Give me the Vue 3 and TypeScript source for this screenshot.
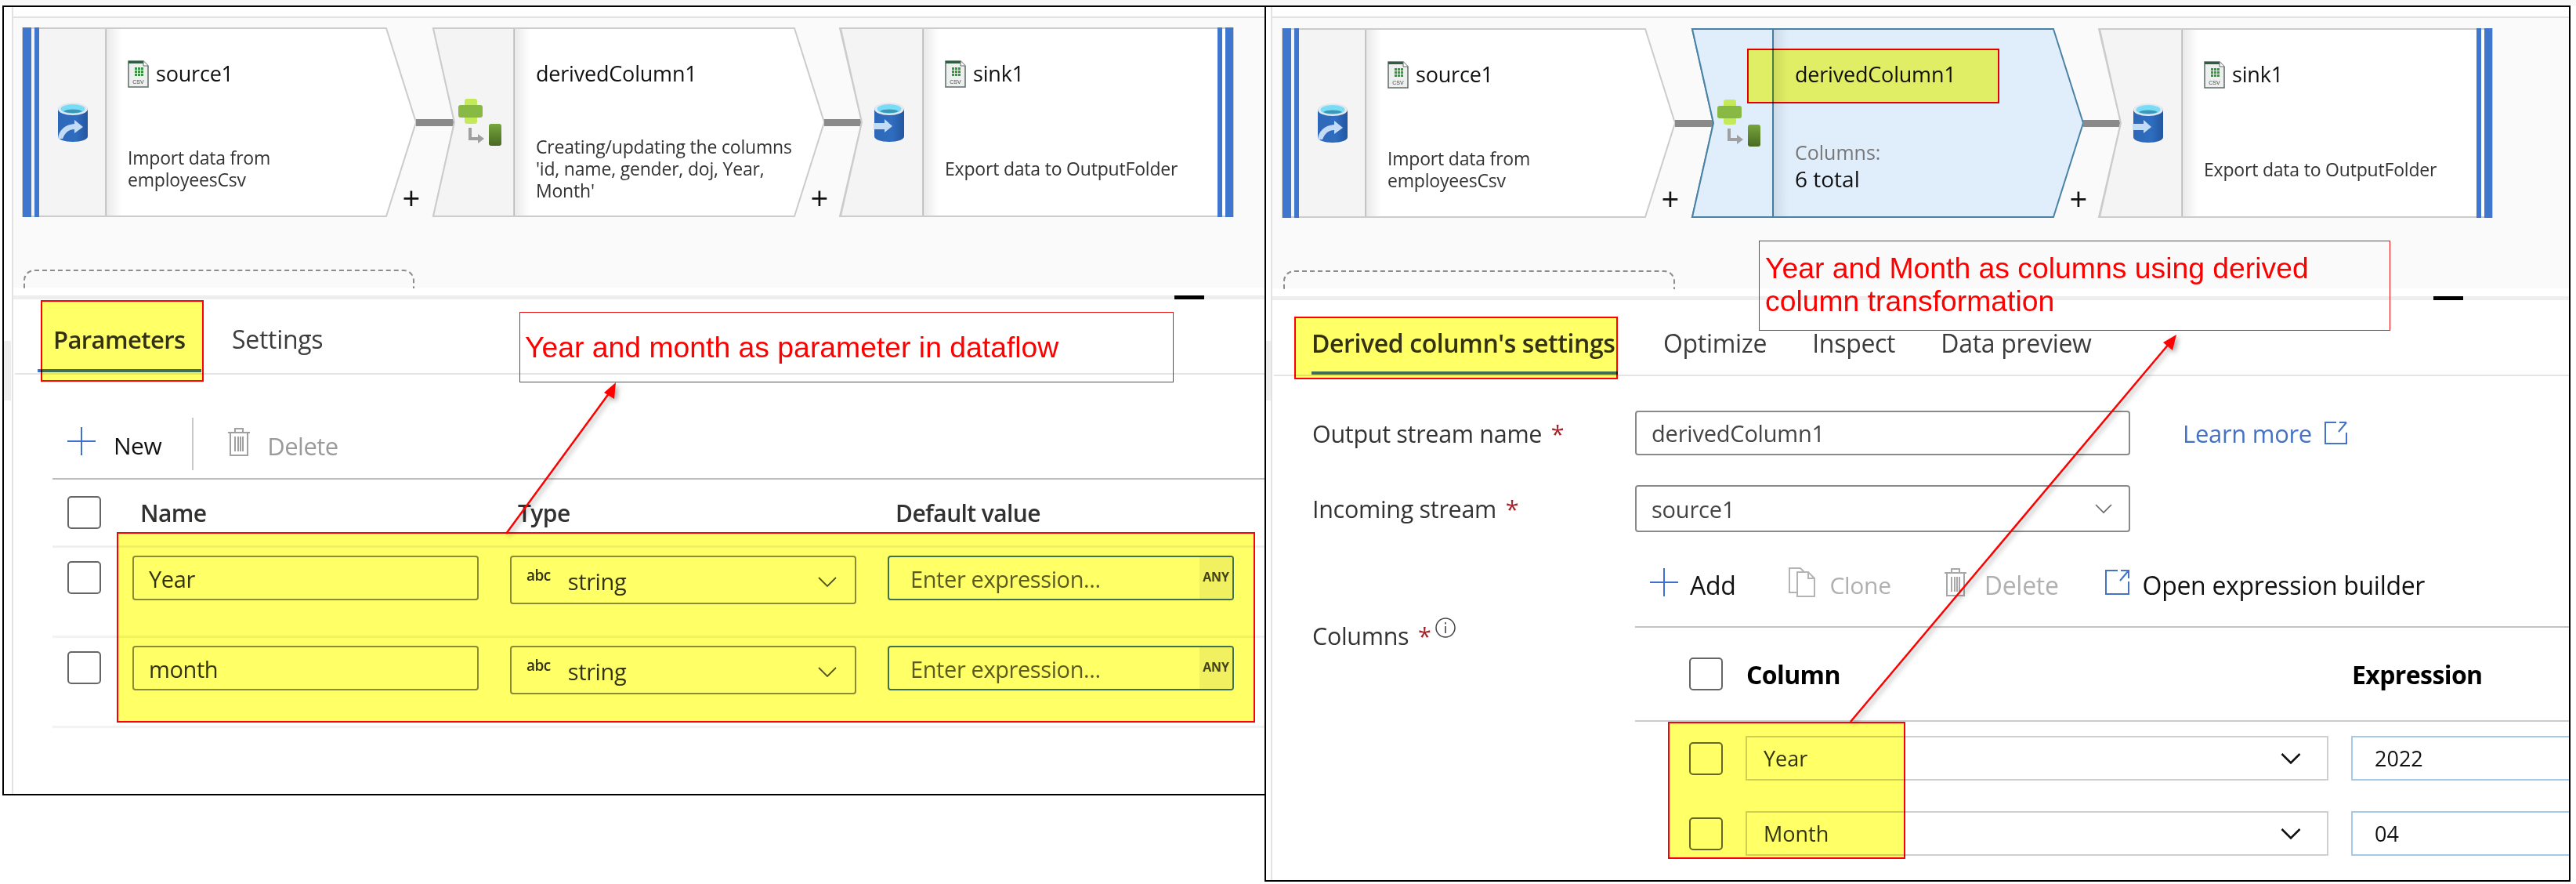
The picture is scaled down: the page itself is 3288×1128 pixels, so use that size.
<script setup lang="ts">
type Kind = 'source' | 'derived' | 'sink'
interface PipeNode {
  kind: Kind
  title: string
  desc: string[]
  width: number
  gap: number
  selected?: boolean
  columns?: string
}
interface Panel {
  id: string
  dashed: number
  nodes: PipeNode[]
}

const panels: Panel[] = [
  {
    id: 'a',
    dashed: 499,
    nodes: [
      { kind: 'source', title: 'source1', desc: ['Import data from', 'employeesCsv'], width: 502, gap: 21 },
      { kind: 'derived', title: 'derivedColumn1', desc: ['Creating/updating the columns', "'id, name, gender, doj, Year,", "Month'"], width: 500, gap: 20 },
      { kind: 'sink', title: 'sink1', desc: ['Export data to OutputFolder'], width: 502, gap: 0 },
    ],
  },
  {
    id: 'b',
    dashed: 500,
    nodes: [
      { kind: 'source', title: 'source1', desc: ['Import data from', 'employeesCsv'], width: 501, gap: 21 },
      { kind: 'derived', title: 'derivedColumn1', desc: [], width: 500, gap: 20, selected: true, columns: '6 total' },
      { kind: 'sink', title: 'sink1', desc: ['Export data to OutputFolder'], width: 502, gap: 0 },
    ],
  },
]

const stripW = (n: PipeNode) => (n.kind === 'derived' ? 104 : 106)
const inset = (n: PipeNode) => (n.kind === 'source' ? 0 : 28)

function bodyPoints(n: PipeNode): string {
  const w = n.width
  const left = inset(n)
  if (n.kind === 'sink') return `0,1 ${w},1 ${w},241 0,241 ${left},121`
  return `${left ? 1 : 0},1 ${w - 38},1 ${w},121 ${w - 38},241 ${left ? 1 : 0},241 ${left},121`
}
function stripPoints(n: PipeNode): string {
  const s = stripW(n)
  const left = inset(n)
  if (left) return `1,1 ${s},1 ${s},241 1,241 ${left},121`
  return `0,1 ${s},1 ${s},241 0,241`
}

const params = ['Year', 'month']
const columnsRows = [
  { name: 'Year', expr: '2022' },
  { name: 'Month', expr: '04' },
]
</script>

<template>
  <div class="page">
    <div class="topstrip"></div>
    <div class="stage">
      <section v-for="panel in panels" :key="panel.id" class="panel" :class="'panel-' + panel.id">
        <div class="gutter"><div class="thumb"></div></div>
        <div class="main">
          <div class="canvas">
            <div class="pipeline">
              <div
                v-for="node in panel.nodes"
                :key="node.kind"
                class="node"
                :style="{ width: node.width + 'px', marginRight: node.gap + 'px' }"
              >
                <svg class="shape" :width="node.width" height="242" :viewBox="`0 0 ${node.width} 242`">
                  <polygon
                    :points="bodyPoints(node)"
                    :fill="node.selected ? '#e0eefc' : '#ffffff'"
                    :stroke="node.selected ? '#4a82a5' : '#cccccc'"
                    stroke-width="2"
                  />
                  <polygon
                    :points="stripPoints(node)"
                    :fill="node.selected ? '#e0eefc' : '#f4f4f4'"
                    :stroke="node.selected ? '#4a82a5' : '#cccccc'"
                    stroke-width="2"
                  />
                  <template v-if="node.kind === 'source'">
                    <rect x="0" y="0" width="11" height="242" fill="#3f77cf" />
                    <rect x="15" y="0" width="6" height="242" fill="#3f77cf" />
                  </template>
                  <template v-if="node.kind === 'sink'">
                    <rect :x="node.width - 20" y="0" width="6" height="242" fill="#3f77cf" />
                    <rect :x="node.width - 10" y="0" width="10" height="242" fill="#3f77cf" />
                  </template>
                </svg>

                <div class="strip" :class="'strip-' + node.kind">
                  <svg v-if="node.kind !== 'derived'" width="40" height="52" viewBox="0 0 40 52">
                    <defs>
                      <linearGradient :id="`cyl-${panel.id}-${node.kind}`" x1="0" x2="1" y1="0" y2="0">
                        <stop offset="0" stop-color="#2e68b8" />
                        <stop offset="0.6" stop-color="#2f6dc0" />
                        <stop offset="1" stop-color="#23569f" />
                      </linearGradient>
                    </defs>
                    <path d="M1 8v36c0 4 8 7 19 7s19-3 19-7V8z" :fill="`url(#cyl-${panel.id}-${node.kind})`" />
                    <ellipse cx="20" cy="9" rx="19" ry="8" fill="#e4e8ee" />
                    <ellipse cx="20" cy="9" rx="15.500" ry="6" fill="#78dcf6" />
                    <path d="M8 12c3-2 7-2.600 12-2.600s9 .6 12 2.600c-3 1.600-7 2.200-12 2.200s-9-.6-12-2.200z" fill="#3d98b8" />
                    <path
                      v-if="node.kind === 'source'"
                      d="M1 47c1-11 9-18 21-19v-5l11 9-11 8v-5c-7 0-12 4-15 12z"
                      fill="#c3dbf4"
                    />
                    <path v-else d="M0 27h14v-5l10 9-10 8v-4H0z" fill="#c3dbf4" />
                  </svg>
                  <svg v-else width="56" height="62" viewBox="0 0 56 62">
                    <defs>
                      <linearGradient :id="`dg-${panel.id}`" x1="0" x2="0" y1="0" y2="1">
                        <stop offset="0" stop-color="#76a63c" />
                        <stop offset="1" stop-color="#4a6a22" />
                      </linearGradient>
                    </defs>
                    <rect x="8" y="1" width="16" height="32" rx="3" fill="#c4ea5a" />
                    <rect x="0" y="9" width="31" height="16" rx="3" fill="#88b944" />
                    <path d="M15 38v14h11" fill="none" stroke="#a0a0a0" stroke-width="4" />
                    <path d="M25 46l8 6-8 6z" fill="#a0a0a0" />
                    <rect x="39" y="33" width="16" height="28" rx="3" :fill="`url(#dg-${panel.id})`" />
                  </svg>
                </div>

                <div class="body" :class="{ 'body-selected': node.selected }">
                  <div class="title-row">
                    <svg v-if="node.kind !== 'derived'" class="csv" width="27" height="35" viewBox="0 0 27 35">
                      <path d="M1 1h19l6 6v27H1z" fill="#eef0f0" stroke="#5f6b68" stroke-width="1.500" />
                      <path d="M1 1h19l1 3H1z" fill="#2f5d42" />
                      <path d="M20 1v6h6" fill="#fff" stroke="#5f6b68" />
                      <g fill="#3f8f46">
                        <rect x="9" y="9" width="3" height="3" /><rect x="13" y="9" width="3" height="3" /><rect x="17" y="9" width="3" height="3" />
                        <rect x="9" y="13" width="3" height="3" /><rect x="13" y="13" width="3" height="3" /><rect x="17" y="13" width="3" height="3" />
                        <rect x="9" y="17" width="3" height="3" /><rect x="13" y="17" width="3" height="3" /><rect x="17" y="17" width="3" height="3" />
                      </g>
                      <text x="13.500" y="30" text-anchor="middle" class="csv-text">CSV</text>
                    </svg>
                    <span class="title">{{ node.title }}</span>
                  </div>
                  <div class="desc-area">
                    <template v-if="node.columns">
                      <div class="cols-label">Columns:</div>
                      <div class="cols-total">{{ node.columns }}</div>
                    </template>
                    <div v-for="line in node.desc" :key="line" class="desc">{{ line }}</div>
                  </div>
                </div>

                <template v-if="node.gap">
                  <div class="connector" :style="{ width: node.gap + 27 + 'px' }"></div>
                  <span class="plus">+</span>
                </template>
              </div>
            </div>
            <div class="dashed-wrap" :style="{ width: panel.dashed + 'px' }"><div class="dashed"></div></div>
          </div>
          <div class="splitter"><span class="split-knob"></span></div>

          <template v-if="panel.id === 'a'">
            <div class="tabs">
              <div class="tab tab-active">Parameters</div>
              <div class="tab">Settings</div>
            </div>
            <div class="toolbar">
              <svg class="tb-plus" width="36" height="36" viewBox="0 0 36 36"><path d="M18 0v36M0 18h36" stroke="#3f6fd0" stroke-width="2" /></svg>
              <span class="tb-new">New</span>
              <span class="tb-sep"></span>
              <svg class="tb-trash" width="30" height="38" viewBox="0 0 30 38">
                <path d="M1 7h28M10 7V2h10v5M4 7v29h22V7M10 12v19M14 12v19M17 12v19M20 12v19" fill="none" stroke="#a0a0a0" stroke-width="2" />
              </svg>
              <span class="tb-delete">Delete</span>
            </div>
            <div class="ptable">
              <div class="prow phead">
                <span class="check"></span>
                <span class="th">Name</span>
                <span class="th">Type</span>
                <span class="th">Default value</span>
              </div>
              <div v-for="p in params" :key="p" class="prow pbody">
                <span class="check check-row"></span>
                <div class="field-box">{{ p }}</div>
                <div class="field-box type-box">
                  <span class="abc">abc</span>
                  <span class="type-val">string</span>
                  <svg class="chev" width="24" height="14" viewBox="0 0 24 14"><path d="M1 1l11 11L23 1" fill="none" stroke="#555" stroke-width="1.800" /></svg>
                </div>
                <div class="field-box expr-box">
                  <span class="placeholder">Enter expression...</span>
                  <span class="any">ANY</span>
                </div>
              </div>
            </div>
          </template>

          <template v-else>
            <div class="tabs">
              <div class="tab tab-active">Derived column's settings</div>
              <div class="tab">Optimize</div>
              <div class="tab">Inspect</div>
              <div class="tab">Data preview</div>
            </div>
            <div class="form-row form-row-1">
              <label class="form-label">Output stream name <em>*</em></label>
              <div class="form-input">derivedColumn1</div>
              <a class="learn">Learn more</a>
              <svg class="learn-icon" width="31" height="31" viewBox="0 0 31 31">
                <path d="M16 2H2v27h27V15M20 2h9v0M29 2L19 14" fill="none" stroke="#4472c4" stroke-width="2" />
              </svg>
            </div>
            <div class="form-row form-row-2">
              <label class="form-label">Incoming stream <em>*</em></label>
              <div class="form-input select-input">
                source1
                <svg width="22" height="13" viewBox="0 0 22 13"><path d="M1 1l10 10L21 1" fill="none" stroke="#666" stroke-width="1.600" /></svg>
              </div>
            </div>
            <div class="cols-section">
              <label class="form-label cols-field">Columns <em>*</em>
                <svg class="info" width="26" height="26" viewBox="0 0 26 26">
                  <circle cx="13" cy="13" r="12" fill="none" stroke="#444" stroke-width="1.500" />
                  <path d="M13 11v9M13 6v2.500" stroke="#444" stroke-width="1.600" />
                </svg>
              </label>
              <div class="cols-main">
                <div class="ctoolbar">
                  <svg width="36" height="36" viewBox="0 0 36 36"><path d="M18 0v36M0 18h36" stroke="#3f6fd0" stroke-width="2" /></svg>
                  <span class="c-add">Add</span>
                  <svg class="c-clone-i" width="34" height="38" viewBox="0 0 34 38">
                    <path d="M10 32H1V1h14l5 5M11 6h14l8 8v23H11zM25 6v8h8" fill="none" stroke="#b4b4b4" stroke-width="2" />
                  </svg>
                  <span class="c-muted c-clone">Clone</span>
                  <svg class="c-trash-i" width="30" height="38" viewBox="0 0 30 38">
                    <path d="M1 7h28M10 7V2h10v5M4 7v29h22V7M10 12v19M14 12v19M17 12v19M20 12v19" fill="none" stroke="#a8a8a8" stroke-width="2" />
                  </svg>
                  <span class="c-muted c-delete">Delete</span>
                  <svg class="c-open-i" width="33" height="34" viewBox="0 0 33 34">
                    <path d="M17 2H2v30h29V16M21 2h10v10M31 2L20 15" fill="none" stroke="#4472c4" stroke-width="2" />
                  </svg>
                  <span class="c-open">Open expression builder</span>
                </div>
                <div class="chead">
                  <span class="check"></span>
                  <span class="cth cth-col">Column</span>
                  <span class="cth">Expression</span>
                </div>
                <div class="crows">
                  <div v-for="c in columnsRows" :key="c.name" class="crow">
                    <span class="check crow-check"></span>
                    <div class="cselect">
                      <span>{{ c.name }}</span>
                      <svg width="26" height="16" viewBox="0 0 26 16"><path d="M1.500 2L13 13.500 24.500 2" fill="none" stroke="#111" stroke-width="2.600" /></svg>
                    </div>
                    <div class="cexpr">{{ c.expr }}</div>
                  </div>
                </div>
              </div>
            </div>
          </template>
        </div>
      </section>

      <div class="hl hl-tab-a"></div>
      <div class="hl hl-rows-a"></div>
      <div class="hl hl-title-b"></div>
      <div class="hl hl-tab-b"></div>
      <div class="hl hl-rows-b"></div>

      <div class="note note-a">Year and month as parameter in dataflow</div>
      <div class="note note-b">Year and Month as columns using derived<br />column transformation</div>

      <svg class="arrows" width="3288" height="1128" viewBox="0 0 3288 1128">
        <g class="arrow-g">
          <path d="M646 681L778 501" fill="none" stroke="#ff0000" stroke-width="2.500" />
          <path d="M786 488L784 509 771 501z" fill="#ff0000" />
          <path d="M2362 921L2769 438" fill="none" stroke="#ff0000" stroke-width="2.500" />
          <path d="M2778 427L2773 447 2761 437z" fill="#ff0000" />
        </g>
      </svg>
    </div>
  </div>
</template>

<style scoped>
.page {
  width: 3288px;
  height: 1128px;
  background: #ffffff;
  overflow: hidden;
  font-family: "Open Sans", "Noto Sans", sans-serif;
  color: #222;
}
.topstrip {
  height: 7px;
  background: #f8f8f8;
}
.stage {
  position: relative;
  display: flex;
  align-items: flex-start;
  padding-left: 3px;
  margin-top: -7px;
  padding-top: 7px;
}
.panel {
  display: flex;
  box-sizing: border-box;
  border: 2px solid #000;
  background: #fff;
  overflow: hidden;
}
.panel-a {
  width: 1611px;
  height: 1008px;
  border-right: none;
}
.panel-b {
  width: 1667px;
  height: 1118px;
}
.gutter {
  flex: none;
  box-sizing: border-box;
  border-right: 2px solid #e2e2e2;
}
.panel-a .gutter {
  width: 12px;
}
.panel-b .gutter {
  width: 8px;
}
.thumb {
  margin-top: 426px;
  height: 76px;
  width: 9px;
  background: #eeeeee;
}
.panel-b .thumb {
  width: 6px;
}
.main {
  flex: 1;
  min-width: 0;
  padding-top: 12px;
}
.canvas {
  border-top: 2px solid #e2e2e2;
  background: #fafafa;
  box-sizing: border-box;
}
.panel-a .canvas {
  height: 346px;
  padding: 12px 0 0 12px;
}
.panel-b .canvas {
  height: 347px;
  padding: 13px 0 0 13px;
}
.pipeline {
  display: flex;
  align-items: flex-start;
}
.node {
  position: relative;
  flex: none;
  height: 242px;
  display: flex;
}
.shape {
  position: absolute;
  left: 0;
  top: 0;
  overflow: visible;
}
.strip {
  position: relative;
  flex: none;
  display: flex;
  align-items: center;
  justify-content: center;
  box-sizing: border-box;
}
.strip-source {
  width: 106px;
  padding-left: 21px;
}
.strip-derived {
  width: 104px;
  padding-left: 18px;
}
.strip-sink {
  width: 106px;
  padding-left: 19px;
}
.body {
  position: relative;
  flex: 1;
  min-width: 0;
  margin: 2px 0;
  padding: 40px 0 0 28px;
  box-sizing: border-box;
  background: linear-gradient(to right, rgba(0, 0, 0, 0.09), rgba(0, 0, 0, 0) 20px);
}
.title-row {
  display: flex;
  align-items: center;
  height: 35px;
  gap: 9px;
}
.title {
  font-size: 27px;
  line-height: 34px;
  padding-bottom: 2px;
  color: #111;
  letter-spacing: -0.2px;
}
.csv-text {
  font-family: "Liberation Sans", sans-serif;
  font-size: 7px;
  fill: #444;
}
.desc-area {
  margin-top: 42px;
  height: 122px;
  display: flex;
  flex-direction: column;
  justify-content: center;
}
.desc {
  font-size: 23px;
  line-height: 28px;
  color: #333;
  letter-spacing: -0.2px;
  white-space: nowrap;
}
.cols-label {
  font-size: 25px;
  line-height: 32px;
  color: #777;
  margin-top: -8px;
}
.cols-total {
  font-size: 28px;
  line-height: 36px;
  color: #111;
  font-weight: 500;
}
.connector {
  position: absolute;
  top: 117px;
  left: 100%;
  height: 9px;
  background: #8a8a8a;
}
.plus {
  position: absolute;
  left: calc(100% - 20px);
  top: 194px;
  width: 28px;
  text-align: center;
  font-size: 40px;
  line-height: 48px;
  color: #111;
}
.dashed-wrap {
  margin-top: 67px;
  margin-left: 1px;
  height: 24px;
  overflow: hidden;
}
.dashed {
  box-sizing: border-box;
  height: 60px;
  border: 2px dashed #8c8c8c;
  border-radius: 14px;
}
.splitter {
  margin-top: 10px;
  height: 5px;
  background: #eeeeee;
}
.split-knob {
  display: block;
  width: 38px;
  height: 5px;
  background: #000;
  margin-left: 1482px;
}
.tabs {
  display: flex;
  margin-left: 2px;
  border-bottom: 2px solid #e4e4e4;
  box-sizing: content-box;
}
.tab {
  box-sizing: border-box;
  font-size: 32px;
  line-height: 40px;
  color: #3c3c3c;
  letter-spacing: -0.3px;
  white-space: nowrap;
}
.tab-active {
  font-weight: 600;
  color: #323130;
  border-bottom: 4px solid #3f6fd0;
  letter-spacing: -0.4px;
}
.panel-a .tabs {
  height: 94px;
  padding-left: 29px;
  gap: 19px;
}
.panel-a .tab {
  padding: 31px 20px 0;
  height: 93px;
}
.panel-a .tab-active {
  width: 209px;
  font-size: 31px;
  letter-spacing: -0.6px;
}
.panel-b .tabs {
  height: 95px;
  padding-left: 48px;
  gap: 58px;
}
.panel-b .tab {
  padding: 35px 0 0;
  height: 95px;
}
.panel-b .tab-active {
  width: 391px;
}
.toolbar {
  margin-left: 50px;
  padding: 55px 0 10px 19px;
  height: 134px;
  box-sizing: border-box;
  border-bottom: 2px solid #bdbdbd;
  display: flex;
  align-items: flex-start;
}
.tb-plus {
  margin-top: 12px;
}
.tb-new {
  margin: 18px 0 0 23px;
  font-size: 30px;
  line-height: 36px;
  color: #111;
  letter-spacing: -0.5px;
}
.tb-sep {
  width: 2px;
  height: 67px;
  background: #c8c8c8;
  margin-left: 39px;
}
.tb-trash {
  margin: 12px 0 0 43px;
}
.tb-delete {
  margin: 18px 0 0 21px;
  font-size: 31px;
  line-height: 36px;
  color: #9a9a9a;
  letter-spacing: -0.5px;
}
.ptable {
  margin-left: 50px;
}
.prow {
  display: grid;
  grid-template-columns: 43px 442px 442px 442px;
  column-gap: 40px;
  padding-left: 19px;
  box-sizing: border-box;
  align-items: start;
}
.phead {
  height: 87px;
  padding-top: 21px;
  border-bottom: 3px solid #f0f0f0;
}
.pbody {
  height: 115px;
  padding-top: 10px;
  border-bottom: 3px solid #f2f2f2;
}
.check {
  box-sizing: border-box;
  display: block;
  width: 43px;
  height: 42px;
  border: 2px solid #666;
  border-radius: 5px;
}
.check-row {
  margin-top: 7px;
}
.th {
  font-size: 30px;
  font-weight: 600;
  color: #323130;
  line-height: 44px;
  padding-left: 10px;
  letter-spacing: -0.6px;
}
.field-box {
  box-sizing: border-box;
  height: 57px;
  border: 2px solid #8a8a8a;
  border-radius: 4px;
  padding-left: 19px;
  font-size: 29px;
  line-height: 56px;
  color: #333;
  letter-spacing: -0.4px;
}
.type-box {
  position: relative;
  height: 62px;
  display: flex;
  align-items: center;
}
.abc {
  font-size: 19px;
  font-weight: 600;
  line-height: 20px;
  margin-top: -12px;
  letter-spacing: -0.5px;
}
.type-val {
  margin-left: 22px;
  margin-top: 4px;
  line-height: 40px;
}
.chev {
  margin-left: auto;
  margin-right: 23px;
  margin-top: 6px;
}
.expr-box {
  border-color: #3f6fd0;
  display: flex;
  padding-left: 27px;
  overflow: hidden;
}
.placeholder {
  color: #5a5a5a;
  flex: 1;
}
.any {
  flex: none;
  width: 42px;
  background: #f0f0f0;
  text-align: center;
  font-size: 16px;
  line-height: 50px;
  font-weight: 700;
  color: #444;
  letter-spacing: -0.2px;
}
.form-row {
  display: flex;
  align-items: center;
  margin-left: 51px;
}
.form-row-1 {
  margin-top: 44px;
  height: 57px;
}
.form-row-2 {
  margin-top: 38px;
  height: 60px;
}
.form-label {
  flex: none;
  width: 412px;
  font-size: 30.500px;
  font-weight: 500;
  color: #333;
  line-height: 36px;
  letter-spacing: -0.3px;
  white-space: nowrap;
}
.form-label em {
  font-style: normal;
  color: #a4262c;
  margin-left: 4px;
}
.form-input {
  box-sizing: border-box;
  width: 632px;
  height: 100%;
  border: 2px solid #8a8a8a;
  border-radius: 4px;
  padding-left: 19px;
  font-size: 29px;
  letter-spacing: -0.2px;
  display: flex;
  align-items: center;
  color: #444;
}
.select-input {
  justify-content: space-between;
  padding-right: 21px;
}
.learn {
  margin-left: 67px;
  font-size: 31px;
  color: #4472c4;
  letter-spacing: -0.3px;
}
.learn-icon {
  margin-left: 15px;
}
.cols-section {
  display: flex;
  align-items: flex-start;
  margin-left: 51px;
}
.cols-field {
  margin-top: 114px;
  position: relative;
}
.info {
  position: relative;
  top: -14px;
  margin-left: 6px;
  vertical-align: middle;
}
.cols-main {
  flex: 1;
  min-width: 0;
}
.ctoolbar {
  display: flex;
  align-items: center;
  margin-top: 45px;
  height: 77px;
  box-sizing: border-box;
  padding: 0 0 38px 19px;
  border-bottom: 2px solid #c4c4c4;
  font-size: 32px;
  letter-spacing: -0.3px;
  white-space: nowrap;
}
.ctoolbar span {
  margin-top: 8px;
}
.c-add {
  margin-left: 15px;
  color: #111;
}
.c-clone-i {
  margin-left: 67px;
}
.c-muted {
  color: #b0b0b0;
  font-size: 30px;
}
.c-clone {
  margin-left: 19px;
}
.c-trash-i {
  margin-left: 67px;
}
.c-delete {
  margin-left: 22px;
  font-size: 32px;
}
.c-open-i {
  margin-left: 58px;
}
.c-open {
  margin-left: 16px;
  color: #111;
}
.chead {
  display: flex;
  align-items: center;
  height: 120px;
  box-sizing: border-box;
  padding-left: 69px;
  border-bottom: 2px solid #cccccc;
}
.cth {
  font-size: 32px;
  font-weight: 700;
  color: #000;
  letter-spacing: -0.6px;
}
.cth-col {
  margin-left: 30px;
  width: 773px;
}
.crows {
  padding: 18px 0 0 69px;
}
.crow {
  display: flex;
  align-items: center;
  height: 57px;
  margin-bottom: 39px;
}
.crow-check {
  flex: none;
}
.cselect {
  flex: none;
  box-sizing: border-box;
  margin-left: 29px;
  width: 744px;
  height: 57px;
  border: 2px solid #cfcfcf;
  display: flex;
  align-items: center;
  justify-content: space-between;
  padding: 0 33px 0 21px;
  font-size: 27px;
  color: #333;
}
.cexpr {
  flex: none;
  box-sizing: border-box;
  margin-left: 29px;
  width: 300px;
  height: 57px;
  border: 2px solid #a8c8e8;
  padding-left: 28px;
  font-size: 27px;
  line-height: 53px;
  color: #111;
}
.hl {
  position: absolute;
  box-sizing: border-box;
  background: #ffff66;
  mix-blend-mode: multiply;
  outline: 2px solid #ff0000;
  outline-offset: -2px;
}
.hl-tab-a {
  left: 52px;
  top: 383px;
  width: 208px;
  height: 104px;
}
.hl-rows-a {
  left: 149px;
  top: 679px;
  width: 1453px;
  height: 243px;
}
.hl-title-b {
  left: 2230px;
  top: 62px;
  width: 322px;
  height: 70px;
}
.hl-tab-b {
  left: 1652px;
  top: 404px;
  width: 413px;
  height: 80px;
}
.hl-rows-b {
  left: 2129px;
  top: 921px;
  width: 303px;
  height: 175px;
}
.note {
  position: absolute;
  box-sizing: border-box;
  border: 1px solid #ee1111;
  font-family: "Liberation Sans", Arial, sans-serif;
  color: #ff0000;
  font-size: 37.330px;
  line-height: 42px;
  white-space: nowrap;
}
.note-a {
  left: 663px;
  top: 398px;
  width: 835px;
  height: 90px;
  padding: 23px 0 0 6px;
}
.note-b {
  left: 2245px;
  top: 307px;
  width: 806px;
  height: 115px;
  padding: 13px 0 0 7px;
}
.arrows {
  position: absolute;
  left: 0;
  top: 0;
  pointer-events: none;
}
.arrow-g {
  filter: drop-shadow(3px 3px 3px rgba(0, 0, 0, 0.35));
}
</style>

<style>
html,
body {
  margin: 0;
  background: #fff;
}
</style>
